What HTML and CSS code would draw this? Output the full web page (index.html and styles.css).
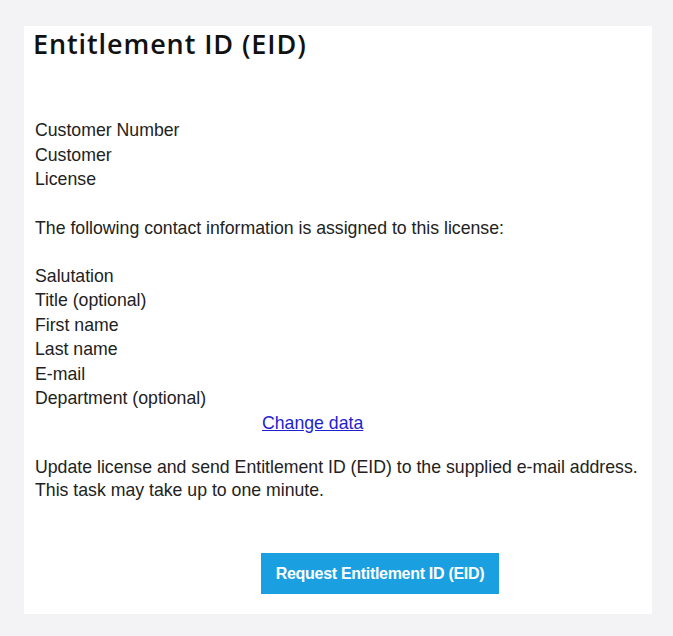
FILE: index.html
```html
<!DOCTYPE html>
<html>
<head>
<meta charset="utf-8">
<link rel="stylesheet" href="styles.css">
</head>
<body>
<div class="card">
  <h1 class="title">Entitlement ID (EID)</h1>
  <div class="block first">
    <div class="line">Customer Number</div>
    <div class="line">Customer</div>
    <div class="line">License</div>
  </div>
  <p class="para">The following contact information is assigned to this license:</p>
  <div class="block">
    <div class="line">Salutation</div>
    <div class="line">Title (optional)</div>
    <div class="line">First name</div>
    <div class="line">Last name</div>
    <div class="line">E-mail</div>
    <div class="line">Department (optional)</div>
  </div>
  <div class="link-row"><a class="link" href="#">Change data</a></div>
  <p class="para note">Update license and send Entitlement ID (EID) to the supplied e-mail address.<br>This task may take up to one minute.</p>
  <div class="actions"><button class="btn">Request Entitlement ID (EID)</button></div>
</div>
</body>
</html>
```
FILE: styles.css
```css
html, body {
  margin: 0;
  padding: 0;
  background: #f3f3f5;
}
body {
  padding: 26px 21px 22px 24px;
  font-family: "Liberation Sans", Arial, sans-serif;
  color: #222;
}
.card {
  background: #fff;
  width: 628px;
  height: 588px;
  box-sizing: border-box;
  padding: 0 11px;
  display: flex;
  flex-direction: column;
}
.title {
  margin: 0 0 0 -2px;
  font-family: "Open Sans", sans-serif;
  font-weight: 600;
  font-size: 27px;
  letter-spacing: 0.9px;
  line-height: 36px;
  color: #111;
}
.block {
  font-size: 17.7px;
  line-height: 24.5px;
}
.block.first {
  margin-top: 56px;
}
.para {
  margin: 24px 0 24px;
  font-size: 17.7px;
  line-height: 24px;
}
.link-row {
  font-size: 17.7px;
  line-height: 24.5px;
  padding-left: 227px;
}
.link {
  color: #1f1fcf;
  text-decoration: underline;
}
.note {
  margin: 21px 0 0;
  line-height: 23px;
}
.actions {
  margin-top: 51px;
  padding-left: 226px;
}
.btn {
  width: 238px;
  height: 41px;
  border: none;
  background: #1a9fe0;
  color: #fff;
  font-family: "Liberation Sans", Arial, sans-serif;
  font-weight: bold;
  font-size: 16px;
  letter-spacing: -0.3px;
}
```
